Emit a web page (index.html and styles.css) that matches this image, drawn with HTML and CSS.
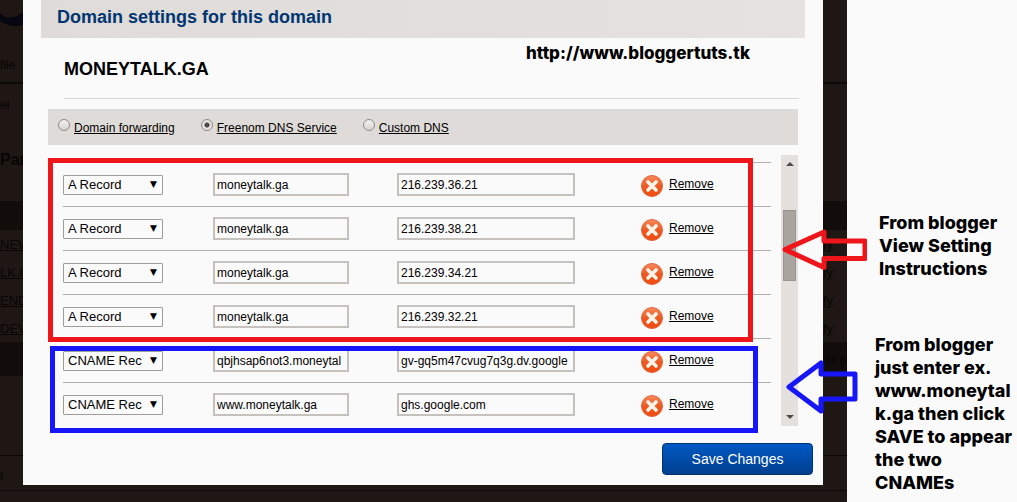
FILE: index.html
```
<!DOCTYPE html>
<html lang="en">
<head>
  <meta charset="UTF-8">
  <meta name="viewport" content="width=device-width, initial-scale=1.0">
  <title>Domain settings</title>
  <link rel="stylesheet" href="styles.css">
</head>
<body>
  <svg class="defs" width="0" height="0">
    <defs>
      <linearGradient id="orange" x1="0" y1="0" x2="0" y2="1">
        <stop offset="0" stop-color="#f58a5c"/>
        <stop offset="0.5" stop-color="#ee5a22"/>
        <stop offset="1" stop-color="#f04a10"/>
      </linearGradient>
      <symbol id="remove" viewBox="0 0 24 24">
        <circle cx="12" cy="12" r="10.500" fill="url(#orange)" stroke="#e2683c" stroke-width="1"/>
        <path d="M8 8l8 8M16 8l-8 8" stroke="#fff4ea" stroke-width="3.6" stroke-linecap="round"/>
      </symbol>
    </defs>
  </svg>

  <div class="site">
    <!-- dimmed page behind the dialog -->
    <div class="backdrop" aria-hidden="true">
      <div class="bd-head"><svg class="bd-logo" width="23" height="27" viewBox="0 0 23 27"><path d="M-4 7C2 20 14 20 23 12V25C12 28 2 24 -4 17z" fill="#070611"/></svg><span>file</span></div>
      <div class="bd-menu">el</div>
      <div class="bd-title">Par</div>
      <div class="bd-band"></div>
      <div class="bd-row"><u>NEW</u><u>fy</u></div>
      <div class="bd-row"><u>LK.G</u><u>fy</u></div>
      <div class="bd-row"><u>END</u><u>fy</u></div>
      <div class="bd-row"><u>DEV</u><u>fy</u></div>
      <div class="bd-band bd-pager"><span>er p</span></div>
      <div class="bd-space"></div>
      <div class="bd-foot">t</div>
    </div>

    <main class="dialog">
      <h1>Domain settings for this domain</h1>
      <h2>MONEYTALK.GA</h2>
      <form>
        <div class="modes">
          <label><input type="radio" name="mode"><span>Domain forwarding</span></label>
          <label><input type="radio" name="mode" checked><span>Freenom DNS Service</span></label>
          <label><input type="radio" name="mode"><span>Custom DNS</span></label>
        </div>

        <div class="records">
          <div class="list">
            <div class="group group-a">
              <div class="row">
                <div class="type"><select aria-label="Type"><option>A Record</option></select></div>
                <input class="name" type="text" value="moneytalk.ga" aria-label="Name">
                <input class="target" type="text" value="216.239.36.21" aria-label="Target">
                <a href="#"><svg width="24" height="24"><use href="#remove"/></svg><span>Remove</span></a>
              </div>
              <div class="row">
                <div class="type"><select aria-label="Type"><option>A Record</option></select></div>
                <input class="name" type="text" value="moneytalk.ga" aria-label="Name">
                <input class="target" type="text" value="216.239.38.21" aria-label="Target">
                <a href="#"><svg width="24" height="24"><use href="#remove"/></svg><span>Remove</span></a>
              </div>
              <div class="row">
                <div class="type"><select aria-label="Type"><option>A Record</option></select></div>
                <input class="name" type="text" value="moneytalk.ga" aria-label="Name">
                <input class="target" type="text" value="216.239.34.21" aria-label="Target">
                <a href="#"><svg width="24" height="24"><use href="#remove"/></svg><span>Remove</span></a>
              </div>
              <div class="row">
                <div class="type"><select aria-label="Type"><option>A Record</option></select></div>
                <input class="name" type="text" value="moneytalk.ga" aria-label="Name">
                <input class="target" type="text" value="216.239.32.21" aria-label="Target">
                <a href="#"><svg width="24" height="24"><use href="#remove"/></svg><span>Remove</span></a>
              </div>
            </div>
            <div class="group group-cname">
              <div class="row">
                <div class="type"><select aria-label="Type"><option>CNAME Rec</option></select></div>
                <input class="name" type="text" value="qbjhsap6not3.moneytal" aria-label="Name">
                <input class="target" type="text" value="gv-gq5m47cvug7q3g.dv.google" aria-label="Target">
                <a href="#"><svg width="24" height="24"><use href="#remove"/></svg><span>Remove</span></a>
              </div>
              <div class="row">
                <div class="type"><select aria-label="Type"><option>CNAME Rec</option></select></div>
                <input class="name" type="text" value="www.moneytalk.ga" aria-label="Name">
                <input class="target" type="text" value="ghs.google.com" aria-label="Target">
                <a href="#"><svg width="24" height="24"><use href="#remove"/></svg><span>Remove</span></a>
              </div>
            </div>
          </div>
          <div class="scrollbar">
            <svg width="8" height="4" viewBox="0 0 8 4"><path d="M0 4L4 0L8 4z" fill="#4d4a48"/></svg>
            <div class="thumb"></div>
            <svg width="8" height="4" viewBox="0 0 8 4"><path d="M0 0L4 4L8 0z" fill="#4d4a48"/></svg>
          </div>
        </div>

        <div class="actions"><button type="button">Save Changes</button></div>
      </form>
      <p class="watermark">http://www.bloggertuts.tk</p>
    </main>

    <svg class="arrow arrow-red" width="86" height="44" viewBox="0 0 86 44">
      <path d="M4 21.5L43 4V13H84V30.500H43V39.500z"/>
    </svg>
    <svg class="arrow arrow-blue" width="74" height="58" viewBox="0 0 74 58">
      <path d="M5 29L37 5V16H71V41H37V53z"/>
    </svg>
  </div>

  <aside class="notes">
    <p class="note-a">From blogger<br>View Setting<br>Instructions</p>
    <p class="note-cname">From blogger<br>just enter ex.<br>www.moneytal<br>k.ga then click<br>SAVE to appear<br>the two<br>CNAMEs</p>
  </aside>
</body>
</html>
```
FILE: styles.css
```
* {
  box-sizing: border-box;
  margin: 0;
  padding: 0;
}
body {
  display: flex;
  min-height: 100vh;
  background: #fbfafa;
  color: #000;
  font-family: "Liberation Sans", Arial, sans-serif;
  font-size: 12px;
}
.defs {
  position: absolute;
}

/* page behind */
.site {
  position: relative;
  flex: 1;
  padding: 0 24px 16px 23px;
  background: #1e1713;
}
.backdrop {
  position: absolute;
  inset: 0;
  overflow: hidden;
  color: #080605;
  font-size: 13px;
}
.bd-head {
  display: flex;
  flex-direction: column;
  gap: 30px;
  height: 84px;
  border-bottom: 2px solid #0b0a0a;
  font-size: 12px;
  line-height: 16px;
}
.bd-menu {
  height: 62px;
  padding-top: 14px;
  font-size: 12px;
}
.bd-title {
  height: 55px;
  padding-top: 5px;
  font-size: 16px;
  font-weight: bold;
}
.bd-band {
  height: 29px;
  background: #120d0a;
}
.bd-row {
  display: flex;
  justify-content: space-between;
  height: 28px;
  padding: 7px 14px 0 0;
  line-height: 15px;
}
.bd-pager {
  height: 34px;
  padding: 10px 0 0;
  text-align: right;
}
.bd-space {
  height: 80px;
  border-bottom: 1px solid #0b0807;
}
.bd-foot {
  height: 35px;
  padding-top: 12px;
  border-bottom: 1px solid #0b0807;
}

/* dialog */
.dialog {
  position: relative;
  padding: 0 10px 10px 25px;
  background: #fbfafa;
}
h1 {
  height: 38px;
  margin: 0 8px 0 -7px;
  padding: 6px 16px 0;
  background: linear-gradient(90deg, #dfdbd8, #e5e2df);
  color: #003671;
  font-size: 18px;
  line-height: 22px;
}
h2 {
  height: 61px;
  margin: 0 14px 0 16px;
  padding-top: 20px;
  border-bottom: 1px solid #dad6d3;
  font-size: 18px;
  line-height: 22px;
}
.modes {
  display: flex;
  gap: 26px;
  height: 36px;
  margin: 10px 15px 0 0;
  padding: 10px;
  background: #dfdbd8;
}
.modes label {
  display: flex;
  gap: 4px;
  height: 18px;
}
.modes span {
  padding-top: 2px;
  line-height: 14px;
  text-decoration: underline;
}
.modes input {
  appearance: none;
  width: 12px;
  height: 12px;
  border: 1px solid #8f8b88;
  border-radius: 50%;
  background: linear-gradient(#f2f0ee, #d8d5d2);
}
.modes input:checked {
  background: radial-gradient(circle, #4a4745 2px, #e4e1df 3px);
}

.records {
  display: flex;
  gap: 10px;
  margin: 10px 15px 0;
}
.list {
  flex: 1;
  padding-top: 7px;
}
.group {
  position: relative;
}
.row {
  display: grid;
  grid-template-columns: 150px 184px 243px 1fr;
  align-items: center;
  height: 44px;
  border-top: 1px solid #b3afac;
}
.type {
  position: relative;
  width: 100px;
}
.type::after {
  content: "▼";
  position: absolute;
  top: 2px;
  right: 6px;
  font-family: "DejaVu Sans", sans-serif;
  font-size: 9px;
  line-height: 14px;
  pointer-events: none;
}
.type select {
  display: block;
  appearance: none;
  width: 100%;
  height: 20px;
  padding: 0 18px 0 4px;
  border: 1px solid #a09c99;
  border-radius: 1px;
  background: #fbfafa;
  color: #000;
  font: 13px "Liberation Sans", Arial, sans-serif;
}
.row input {
  height: 23px;
  padding: 0 2px;
  border: 2px solid #c5c1bc;
  background: #fbfafa;
  color: #000;
  font: 12px "Liberation Sans", Arial, sans-serif;
}
.row .name {
  width: 136px;
}
.row .target {
  width: 178px;
}
.row a {
  display: flex;
  gap: 5px;
  color: #000;
  line-height: 24px;
}
.row a svg {
  margin-top: 2px;
}

/* marker frames over the two record groups */
.group::after {
  content: "";
  position: absolute;
  z-index: 1;
  border: 5px solid;
  pointer-events: none;
}
.group-a::after {
  inset: -4px 18px -4px -15px;
  border-color: #ee151b;
}
.group-cname::after {
  inset: 8px 13px -7px -13px;
  border-color: #1616f8;
}

.scrollbar {
  display: flex;
  flex-direction: column;
  align-items: center;
  justify-content: space-between;
  width: 17px;
  padding: 7px 0;
  background: #e3e0de;
}
.thumb {
  width: 13px;
  height: 71px;
  margin-bottom: 90px;
  border: 1px solid #98938f;
  background: #aaa49f;
}

.actions {
  margin-top: 17px;
  text-align: right;
}
button {
  display: inline-block;
  width: 151px;
  height: 32px;
  border: 1px solid #00346f;
  border-radius: 4px;
  background: linear-gradient(#0058c4, #003f8f);
  color: #fff;
  font: 14px "Liberation Sans", Arial, sans-serif;
  vertical-align: top;
}

/* annotations */
.watermark,
.notes {
  font-family: Inter, "Liberation Sans", sans-serif;
  font-weight: 800;
  line-height: 23px;
  white-space: nowrap;
}
.watermark {
  position: absolute;
  top: 42px;
  left: 503px;
  font-size: 17px;
}
.arrow {
  position: absolute;
  z-index: 2;
  fill: none;
  stroke-width: 5px;
  stroke-linejoin: round;
}
.arrow-red {
  top: 228px;
  right: -20px;
  stroke: #ee151b;
}
.arrow-blue {
  top: 358px;
  right: -11px;
  stroke: #1616f8;
}
.notes {
  width: 170px;
  padding-top: 211px;
  font-size: 18px;
}
.note-a {
  margin: 0 0 53px 32px;
}
.note-cname {
  margin-left: 28px;
}
```
